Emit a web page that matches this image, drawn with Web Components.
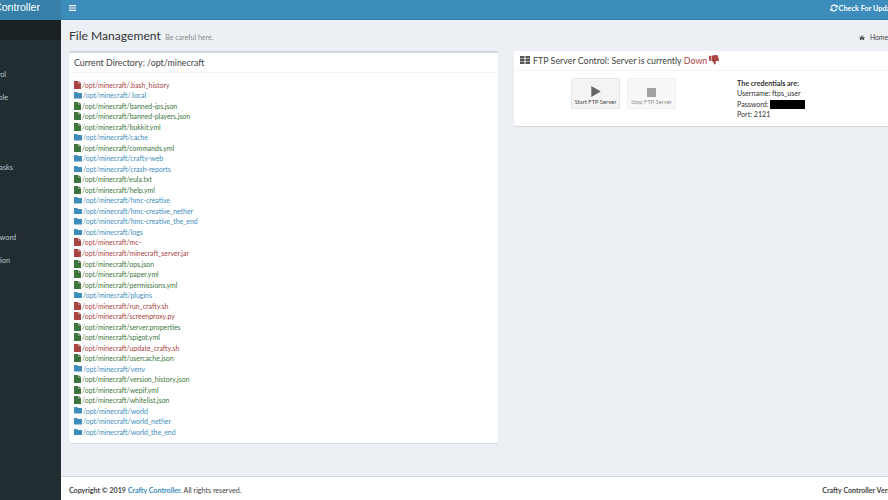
<!DOCTYPE html>
<html>
<head>
<meta charset="utf-8">
<title>Crafty Controller</title>
<style>
  html, body { margin: 0; padding: 0; background: #ecf0f5; }
  body { font-family: Lato, "Noto Sans", sans-serif; overflow: hidden; }
</style>
</head>
<body>
<crafty-app>
  <side-menu slot="side"></side-menu>
  <top-bar slot="top"></top-bar>
  <file-panel slot="files"></file-panel>
  <ftp-panel slot="ftp"></ftp-panel>
  <page-footer slot="foot"></page-footer>
</crafty-app>

<script>
const ICONS = {
  file: '<svg viewBox="0 0 14 16" width="7" height="8"><path fill="currentColor" d="M0 0h8v5h6v11H0z"/><path fill="currentColor" d="M9 0l5 4H9z"/><path fill="#000" opacity=".3" d="M8 5h6v2H8z"/></svg>',
  folder: '<svg viewBox="0 0 16 13" width="8" height="6.5"><path fill="currentColor" d="M1 0h5l2 2h7a1 1 0 0 1 1 1v9a1 1 0 0 1-1 1H1a1 1 0 0 1-1-1V1a1 1 0 0 1 1-1z"/></svg>',
  bars: '<svg viewBox="0 0 14 12" width="7" height="6"><path fill="currentColor" d="M0 0h14v2.4H0zM0 4.8h14v2.4H0zM0 9.6h14V12H0z"/></svg>',
  sync: '<svg viewBox="0 0 16 16" width="8" height="8"><path fill="none" stroke="currentColor" stroke-width="2.6" d="M2.5 7a5.6 5.6 0 0 1 10-2.6M13.5 9a5.6 5.6 0 0 1-10 2.6"/><path fill="currentColor" d="M15.5 1v6h-6zM.5 15V9h6z"/></svg>',
  home: '<svg viewBox="0 0 16 14" width="6" height="5.5"><path fill="currentColor" d="M8 0l8 7-1 1.2L8 2.4 1 8.2 0 7z"/><path fill="currentColor" d="M2.5 8L8 3.6 13.5 8v6H9.6v-4H6.4v4H2.5z"/></svg>',
  server: '<svg viewBox="0 0 20 16" width="10" height="8"><path fill="#555" d="M0 0h9v4.5H0zM11 0h9v4.5h-9zM0 5.700h9v4.600H0zM11 5.700h9v4.600h-9zM0 11.500h9V16H0zM11 11.500h9V16h-9z"/></svg>',
  down: '<svg viewBox="0 0 16 15" width="10" height="9.500"><path fill="currentColor" d="M0 1h3v8H0zM4 1.500C6 .5 8 0 10.500 0 13 0 14 .6 14.400 2l1.500 5.500c.2 1-.4 1.800-1.500 1.800H10.500l.5 2.700c.2 1.500-.7 3-1.800 3-.7 0-1-.5-1.200-1.500C7.600 11.500 6 10 4 9z"/></svg>',
  play: '<svg viewBox="0 0 12 14" width="10" height="11"><path fill="currentColor" d="M0 0l12 7-12 7z"/></svg>',
  stop: '<svg viewBox="0 0 12 12" width="9.500" height="9.500"><path fill="currentColor" d="M0 0h12v12H0z"/></svg>'
};

class CraftyApp extends HTMLElement {
  constructor() {
    super();
    this.attachShadow({ mode: 'open' });
    this.shadowRoot.innerHTML = `
      <style>
        :host { display: block; width: 888px; height: 500px; overflow: hidden; }
        .shell { display: grid; grid-template-columns: 61px 880px; height: 500px; }
        .main { display: flex; flex-direction: column; height: 500px; background: #ecf0f5; }
        .content { flex: 1; display: flex; flex-direction: column; padding: 8px 8px 0; box-sizing: border-box; min-height: 0; }
        .heading { display: flex; align-items: baseline; height: 23px; color: #333; }
        h1 { margin: 0; font-size: 12.100px; font-weight: 400; }
        small { margin-left: 4.500px; font-size: 7px; color: #8a8a8a; }
        .crumb { margin-left: auto; padding-right: 45px; display: flex; align-items: center; gap: 5px; font-size: 6.800px; color: #444; }
        .cols { display: grid; grid-template-columns: 429px 1fr; column-gap: 16px; align-items: start; }
      </style>
      <div class="shell">
        <slot name="side"></slot>
        <div class="main">
          <slot name="top"></slot>
          <div class="content">
            <div class="heading">
              <h1>File Management</h1><small>Be careful here.</small>
              <span class="crumb">${ICONS.home}<span>Home</span></span>
            </div>
            <div class="cols">
              <slot name="files"></slot>
              <slot name="ftp"></slot>
            </div>
          </div>
          <slot name="foot"></slot>
        </div>
      </div>`;
  }
}

class SideMenu extends HTMLElement {
  constructor() {
    super();
    this.attachShadow({ mode: 'open' });
    const items = [
      ['Server Control', 6], ['Server Console', 8], ['', 0], ['', 0],
      ['Scheduled Tasks', 13], ['', 0], ['', 0],
      ['Change Password', 16], ['Configuration', 10]
    ];
    const rows = items.map(([label, end]) =>
      `<div class="item" style="padding-right:${61 - end}px">${label}</div>`).join('');
    this.shadowRoot.innerHTML = `
      <style>
        :host { display: flex; flex-direction: column; width: 61px; height: 500px; background: #222d32; overflow: hidden; }
        .logo { height: 20px; background: #367fa9; color: #fff; font-family: "Liberation Sans", sans-serif; font-size: 10.600px; line-height: 14px; display: flex; justify-content: flex-end; white-space: nowrap; padding-right: 21px; }
        .strip { height: 20px; background: #1a2226; }
        .menu { padding-top: 22.500px; }
        .item { height: 23.300px; line-height: 23.300px; display: flex; justify-content: flex-end; white-space: nowrap; font-size: 7.300px; color: #b8c7ce; }
      </style>
      <div class="logo">Crafty Controller</div>
      <div class="strip"></div>
      <div class="menu">${rows}</div>`;
  }
}

class TopBar extends HTMLElement {
  constructor() {
    super();
    this.attachShadow({ mode: 'open' });
    this.shadowRoot.innerHTML = `
      <style>
        :host { display: flex; align-items: center; height: 20px; flex: none; background: #3c8dbc; color: #fff; padding: 0 0 0 8px; box-sizing: border-box; border-bottom: 1px solid #367fa9; }
        .toggle { display: flex; margin-top: -3px; }
        .check { margin-left: auto; margin-right: 41px; margin-top: -3px; display: flex; align-items: center; gap: 1px; font-size: 7.300px; font-weight: 700; white-space: nowrap; }
      </style>
      <span class="toggle">${ICONS.bars}</span>
      <span class="check">${ICONS.sync}<span>Check For Updates</span></span>`;
  }
}

class FileRow extends HTMLElement {
  constructor() {
    super();
    this.attachShadow({ mode: 'open' });
  }
  connectedCallback() {
    const kind = this.getAttribute('kind');
    const colors = { dir: '#3c8dbc', ok: '#3c763d', exec: '#a94442' };
    const icon = kind === 'dir' ? ICONS.folder : ICONS.file;
    this.shadowRoot.innerHTML = `
      <style>
        :host { display: flex; align-items: center; height: 10.530px; font-size: 6.900px; white-space: nowrap; color: ${colors[kind]}; }
        .ic { display: flex; width: ${kind === 'dir' ? 9 : 8}px; }
      </style>
      <span class="ic">${icon}</span><slot></slot>`;
  }
}

class FilePanel extends HTMLElement {
  constructor() {
    super();
    this.attachShadow({ mode: 'open' });
    const files = [
      ['exec', '.bash_history'], ['dir', '.local'], ['ok', 'banned-ips.json'], ['ok', 'banned-players.json'],
      ['ok', 'bukkit.yml'], ['dir', 'cache'], ['ok', 'commands.yml'], ['dir', 'crafty-web'],
      ['dir', 'crash-reports'], ['ok', 'eula.txt'], ['ok', 'help.yml'], ['dir', 'hmc-creative'],
      ['dir', 'hmc-creative_nether'], ['dir', 'hmc-creative_the_end'], ['dir', 'logs'], ['exec', 'mc-'],
      ['exec', 'minecraft_server.jar'], ['ok', 'ops.json'], ['ok', 'paper.yml'], ['ok', 'permissions.yml'],
      ['dir', 'plugins'], ['exec', 'run_crafty.sh'], ['exec', 'screenproxy.py'], ['ok', 'server.properties'],
      ['ok', 'spigot.yml'], ['exec', 'update_crafty.sh'], ['ok', 'usercache.json'], ['dir', 'venv'],
      ['ok', 'version_history.json'], ['ok', 'wepif.yml'], ['ok', 'whitelist.json'], ['dir', 'world'],
      ['dir', 'world_nether'], ['dir', 'world_the_end']
    ];
    const rows = files.map(([k, n]) => `<file-row kind="${k}">/opt/minecraft/${n}</file-row>`).join('');
    this.shadowRoot.innerHTML = `
      <style>
        :host { display: block; height: 392px; box-sizing: border-box; background: #fff; border-top: 2px solid #d2d6de; border-radius: 2px; box-shadow: 0 1px 1px rgba(0,0,0,.1); }
        .head { height: 20px; padding: 0 5px 1px; display: flex; align-items: center; box-sizing: border-box; font-size: 8.850px; color: #444; border-bottom: 1px solid #f4f4f4; }
        .list { padding: 6.500px 5px 0; }
      </style>
      <div class="head">Current Directory: /opt/minecraft</div>
      <div class="list">${rows}</div>`;
  }
}

class FtpPanel extends HTMLElement {
  constructor() {
    super();
    this.attachShadow({ mode: 'open' });
    this.shadowRoot.innerHTML = `
      <style>
        :host { display: block; height: 75px; box-sizing: border-box; background: #fff; border-radius: 2px; box-shadow: 0 1px 1px rgba(0,0,0,.1); color: #444; }
        .head { height: 20px; padding: 0 5px 1px 6px; display: flex; align-items: center; gap: 3px; font-size: 8.900px; border-bottom: 1px solid #f4f4f4; box-sizing: border-box; }
        .down { color: #a94442; }
        .head .ic { display: flex; }
        .head .ic.down { margin-left: -1px; }
        .body { display: grid; grid-template-columns: 223px 1fr; padding-top: 7px; }
        .btns { display: flex; gap: 7px; padding-left: 57px; align-items: flex-start; }
        .btn { width: 49px; height: 31px; box-sizing: border-box; border: 1px solid #e6e6e6; border-radius: 2px; background: #f4f4f4; display: flex; flex-direction: column; align-items: center; justify-content: flex-end; padding-bottom: 3px; font-size: 5.800px; color: #444; white-space: nowrap; }
        .btn svg { display: block; margin-bottom: 1px; color: #666; }
        .btn.off { opacity: .6; }
        .creds { font-size: 7.100px; line-height: 10.500px; color: #333; padding-top: .5px; }
        .creds b { display: block; font-weight: 700; }
        .creds div { display: flex; align-items: center; }
        .mask { display: inline-block; width: 35px; height: 9px; background: #000; }
      </style>
      <div class="head"><span class="ic">${ICONS.server}</span>
        <span>FTP Server Control: Server is currently <span class="down">Down</span></span>
        <span class="ic down">${ICONS.down}</span></div>
      <div class="body">
        <div class="btns">
          <div class="btn">${ICONS.play}Start FTP Server</div>
          <div class="btn off">${ICONS.stop}Stop FTP Server</div>
        </div>
        <div class="creds">
          <b>The credentials are:</b>
          <div>Username: ftps_user</div>
          <div>Password:&nbsp;<span class="mask"></span></div>
          <div>Port: 2121</div>
        </div>
      </div>`;
  }
}

class PageFooter extends HTMLElement {
  constructor() {
    super();
    this.attachShadow({ mode: 'open' });
    this.shadowRoot.innerHTML = `
      <style>
        :host { display: flex; align-items: center; justify-content: space-between; flex: none; height: 24px; box-sizing: border-box; padding: 3px 0 0 8px; background: #fff; border-top: 1px solid #d2d6de; font-size: 7.100px; color: #444; white-space: nowrap; }
        a { color: #3c8dbc; font-weight: 700; text-decoration: none; }
        b { font-weight: 700; }
        .ver { margin-right: 29px; }
      </style>
      <span><b>Copyright © 2019 <a>Crafty Controller.</a></b> All rights reserved.</span>
      <span class="ver"><b>Crafty Controller Version 3.0</b></span>`;
  }
}

customElements.define('crafty-app', CraftyApp);
customElements.define('side-menu', SideMenu);
customElements.define('top-bar', TopBar);
customElements.define('file-row', FileRow);
customElements.define('file-panel', FilePanel);
customElements.define('ftp-panel', FtpPanel);
customElements.define('page-footer', PageFooter);
</script>
</body>
</html>
